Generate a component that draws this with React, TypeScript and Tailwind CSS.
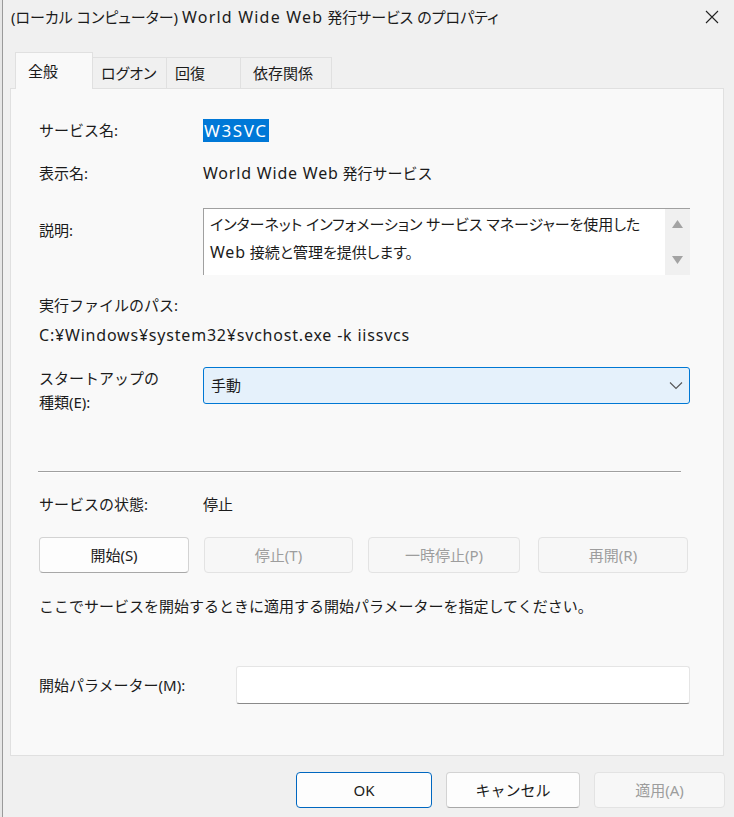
import React from "react";

const F = "font-['Noto_Sans','Noto_Sans_CJK_JP',sans-serif]";

function L({ children }: { children: React.ReactNode }) {
  return <span className="text-[16px] tracking-[0.8px]">{children}</span>;
}

function Btn({ label, disabled, primary, w }: { label: string; disabled?: boolean; primary?: boolean; w: string }) {
  const base = "h-[36px] rounded-[4px] flex items-center justify-center text-[15px] ";
  let cls = "";
  if (disabled) cls = "bg-[#f7f7f7] border border-[#e3e3e3] text-[#9d9d9d]";
  else if (primary) cls = "bg-[#fdfdfd] border-[1.5px] border-[#0067c0] text-[#1b1b1b]";
  else cls = "bg-[#fdfdfd] border border-[#d3d3d3] border-b-[#a8a8a8] text-[#1b1b1b]";
  return <div className={base + cls + " " + w}>{label}</div>;
}

export default function App() {
  return (
    <div className={"w-[734px] h-[817px] bg-[#f0f0f0] flex text-[#1b1b1b] " + F}>
      <div className="w-[4px] h-full bg-[#e6e6e6] border-r border-[#9a9a9a]" />
      <div className="flex-1 flex flex-col">
        {/* title bar */}
        <div className="h-[34px] flex items-center justify-between pl-[8px] pr-[12px]">
          <span className="text-[15px] [font-feature-settings:'palt']">(ローカル コンピューター) <span className="text-[16px] tracking-[1.2px]">World Wide Web</span> 発行サービス のプロパティ</span>
          <svg width="16" height="16" viewBox="0 0 16 16" className="mr-[2px]">
            <path d="M2 2 L14 14 M14 2 L2 14" stroke="#222" strokeWidth="1.1" fill="none" />
          </svg>
        </div>
        {/* tabs */}
        <div className="mt-[18px] ml-[12px] flex items-end h-[36px] relative z-10">
          <div className="w-[78px] h-[37px] bg-[#f9f9f9] border border-[#e0e0e0] border-b-0 flex items-center pl-[12px] text-[15px] -mb-[1px]">全般</div>
          <div className="w-[74px] h-[31px] border border-l-0 border-[#e0e0e0] border-b-0 flex items-center pl-[8px] text-[15px] [font-feature-settings:'palt']">ログオン</div>
          <div className="w-[74px] h-[31px] border border-l-0 border-[#e0e0e0] border-b-0 flex items-center pl-[8px] text-[15px]">回復</div>
          <div className="w-[91px] h-[31px] border border-l-0 border-[#e0e0e0] border-b-0 flex items-center pl-[12px] text-[15px]">依存関係</div>
        </div>
        {/* panel */}
        <div className="ml-[7px] mr-[10px] h-[668px] bg-[#f9f9f9] border border-[#e0e0e0] pl-[28px] pr-[33px] flex flex-col text-[15px]">
          <div className="mt-[29px] h-[24px] flex items-center">
            <span className="w-[164px]">サービス名:</span>
            <span className="bg-[#0078d7] text-white pl-[1px] pr-[1px] leading-[23px] text-[17px] tracking-[1.6px]">W3SVC</span>
          </div>
          <div className="mt-[19px] h-[24px] flex items-center">
            <span className="w-[164px]">表示名:</span>
            <span><L>World Wide Web</L> 発行サービス</span>
          </div>
          <div className="mt-[23px] flex">
            <span className="w-[164px] pt-[10px] leading-[24px]">説明:</span>
            <div className="w-[487px] h-[67px] bg-white border-t border-l border-[#a0a0a0] flex">
              <div className="flex-1 pl-[6px] pt-[1px] leading-[28px] text-[15px] whitespace-nowrap overflow-hidden [font-feature-settings:'palt']">
                インターネット インフォメーション サービス マネージャーを使用した<br /><L>Web</L> 接続と管理を提供します。
              </div>
              <div className="w-[25px] bg-[#f0f0f0] flex flex-col items-center justify-between py-[11px]">
                <svg width="11" height="8" viewBox="0 0 11 8"><path d="M5.5 0 L11 8 L0 8 Z" fill="#a3a3a3" /></svg>
                <svg width="11" height="8" viewBox="0 0 11 8"><path d="M0 0 L11 0 L5.5 8 Z" fill="#a3a3a3" /></svg>
              </div>
            </div>
          </div>
          <div className="mt-[18px] h-[24px] flex items-center">実行ファイルのパス:</div>
          <div className="mt-[6px] h-[24px] flex items-center"><L>C:¥Windows¥system32¥svchost.exe -k iissvcs</L></div>
          <div className="mt-[19px] flex">
            <div className="w-[164px] leading-[24px]">スタートアップの<br />種類(E):</div>
            <div className="w-[487px] h-[37px] mt-[1px] bg-[#e5f1fb] border-[1.5px] border-[#0078d4] rounded-[3px] flex items-center justify-between pl-[7px] pr-[6px]">
              <span>手動</span>
              <svg width="14" height="9" viewBox="0 0 14 9"><path d="M1 1.5 L7 7.5 L13 1.5" stroke="#555" strokeWidth="1.1" fill="none" /></svg>
            </div>
          </div>
          <div className="mt-[57px] ml-[-1px] w-[643px] h-[2px] bg-[#a0a0a0] border-b border-[#ffffff]" />
          <div className="mt-[19px] h-[24px] flex items-center">
            <span className="w-[164px]">サービスの状態:</span>
            <span>停止</span>
          </div>
          <div className="mt-[21px] flex">
            <Btn label="開始(S)" w="w-[150px]" />
            <div className="ml-[15px]"><Btn label="停止(T)" w="w-[149px]" disabled /></div>
            <div className="ml-[15px]"><Btn label="一時停止(P)" w="w-[152px]" disabled /></div>
            <div className="ml-[18px]"><Btn label="再開(R)" w="w-[150px]" disabled /></div>
          </div>
          <div className="mt-[21px] h-[24px] flex items-center">ここでサービスを開始するときに適用する開始パラメーターを指定してください。</div>
          <div className="mt-[48px] flex items-center">
            <span className="w-[197px]">開始パラメーター(M):</span>
            <div className="w-[454px] h-[38px] bg-white border border-[#e5e5e5] border-b-[#8a8a8a] rounded-[3px]" />
          </div>
        </div>
        {/* bottom buttons */}
        <div className="mt-[16px] flex justify-end pr-[9px] gap-[14px]">
          <Btn label="OK" primary w="w-[136px]" />
          <Btn label="キャンセル" w="w-[134px]" />
          <Btn label="適用(A)" disabled w="w-[131px]" />
        </div>
      </div>
    </div>
  );
}
